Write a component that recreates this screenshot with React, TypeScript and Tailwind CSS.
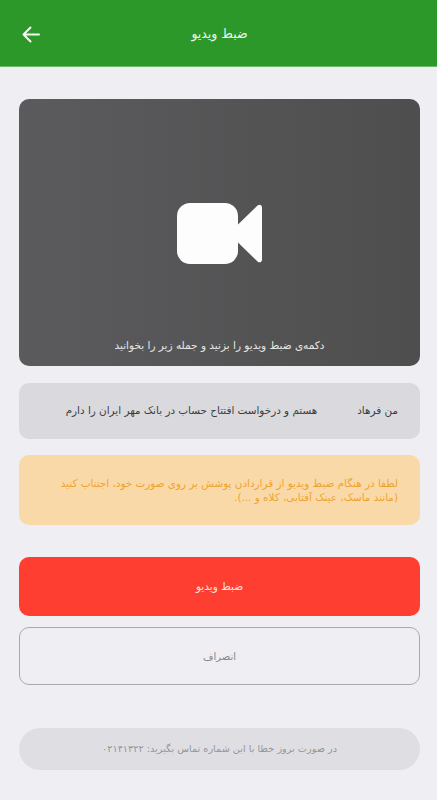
export default function App() {
  return (
    <div
      dir="rtl"
      className="flex h-[800px] w-[437px] flex-col overflow-hidden bg-[#eeeef3] font-['DejaVu_Sans','Noto_Sans',sans-serif]"
    >
      <header className="flex h-[67px] shrink-0 items-center justify-center border-b border-[#6dba6a] bg-[#2c982a] pt-[2px]">
        <div dir="ltr" className="relative flex w-full items-center justify-center pl-[2px]">
          <svg className="absolute top-[1px] left-[22px]" width="18" height="17" viewBox="0 0 18 17" fill="none" stroke="#f4f8f2" strokeWidth="2" strokeLinecap="round" strokeLinejoin="round">
            <path d="M17 8.500H1.500M8.500 1.500L1.500 8.500L8.500 15.500" />
          </svg>
          <h1 dir="rtl" className="text-center text-[12.500px] font-medium text-[#f1f5ee]">
            ضبط ویدیو
          </h1>
        </div>
      </header>

      <main className="flex flex-col pt-[32px] pr-[17px] pl-[19px]">
        <section className="flex h-[267px] flex-col items-center rounded-[10px] bg-gradient-to-r from-[#5b5b5e] to-[#4f4e4e] pt-[104px]">
          <svg width="85" height="61" viewBox="0 0 85 61" fill="#fdfdfd">
            <rect x="0" y="0" width="61" height="61" rx="13" />
            <path d="M61 21.500L80.500 2.500C82.500 0.800 85 1.800 85 4.500V56.500C85 59.200 82.500 60.200 80.500 58.500L61 39.500Z" />
          </svg>
          <p className="mt-[74px] text-[10.500px] text-[#e6e6e6]">
            دکمه‌ی ضبط ویدیو را بزنید و جمله زیر را بخوانید
          </p>
        </section>

        <section className="mt-[17px] flex h-[56px] items-center gap-[40px] rounded-[10px] bg-[#dadade] pr-[22px] text-[10.400px] text-[#3c3c41]">
          <span>من فرهاد</span>
          <span>هستم و درخواست افتتاح حساب در بانک مهر ایران را دارم</span>
        </section>

        <section className="mt-[16px] flex h-[70px] items-center rounded-[10px] bg-[#fad9a8] pr-[22px] pl-[20px] text-[10.400px] leading-[14px] text-[#eea32f]">
          <p>
            لطفا در هنگام ضبط ویدیو از قراردادن پوشش بر روی صورت خود، اجتناب کنید (مانند ماسک، عینک آفتابی، کلاه و ...).
          </p>
        </section>

        <button type="button" className="mt-[32px] h-[59px] rounded-[10px] bg-[#fe3e30] text-[10.500px] text-[#fbe6e2]">
          ضبط ویدیو
        </button>
        <button type="button" className="mt-[11px] h-[58px] rounded-[10px] border-[1.500px] border-[#a9a9b0] text-[10px] text-[#88888d]">
          انصراف
        </button>

        <p className="mt-[43px] flex h-[42px] items-center justify-center rounded-full bg-[#dfdfe3] text-[9.700px] text-[#949499]">
          در صورت بروز خطا با این شماره تماس بگیرید: ۰۲۱۴۱۳۲۲
        </p>
      </main>
    </div>
  );
}
